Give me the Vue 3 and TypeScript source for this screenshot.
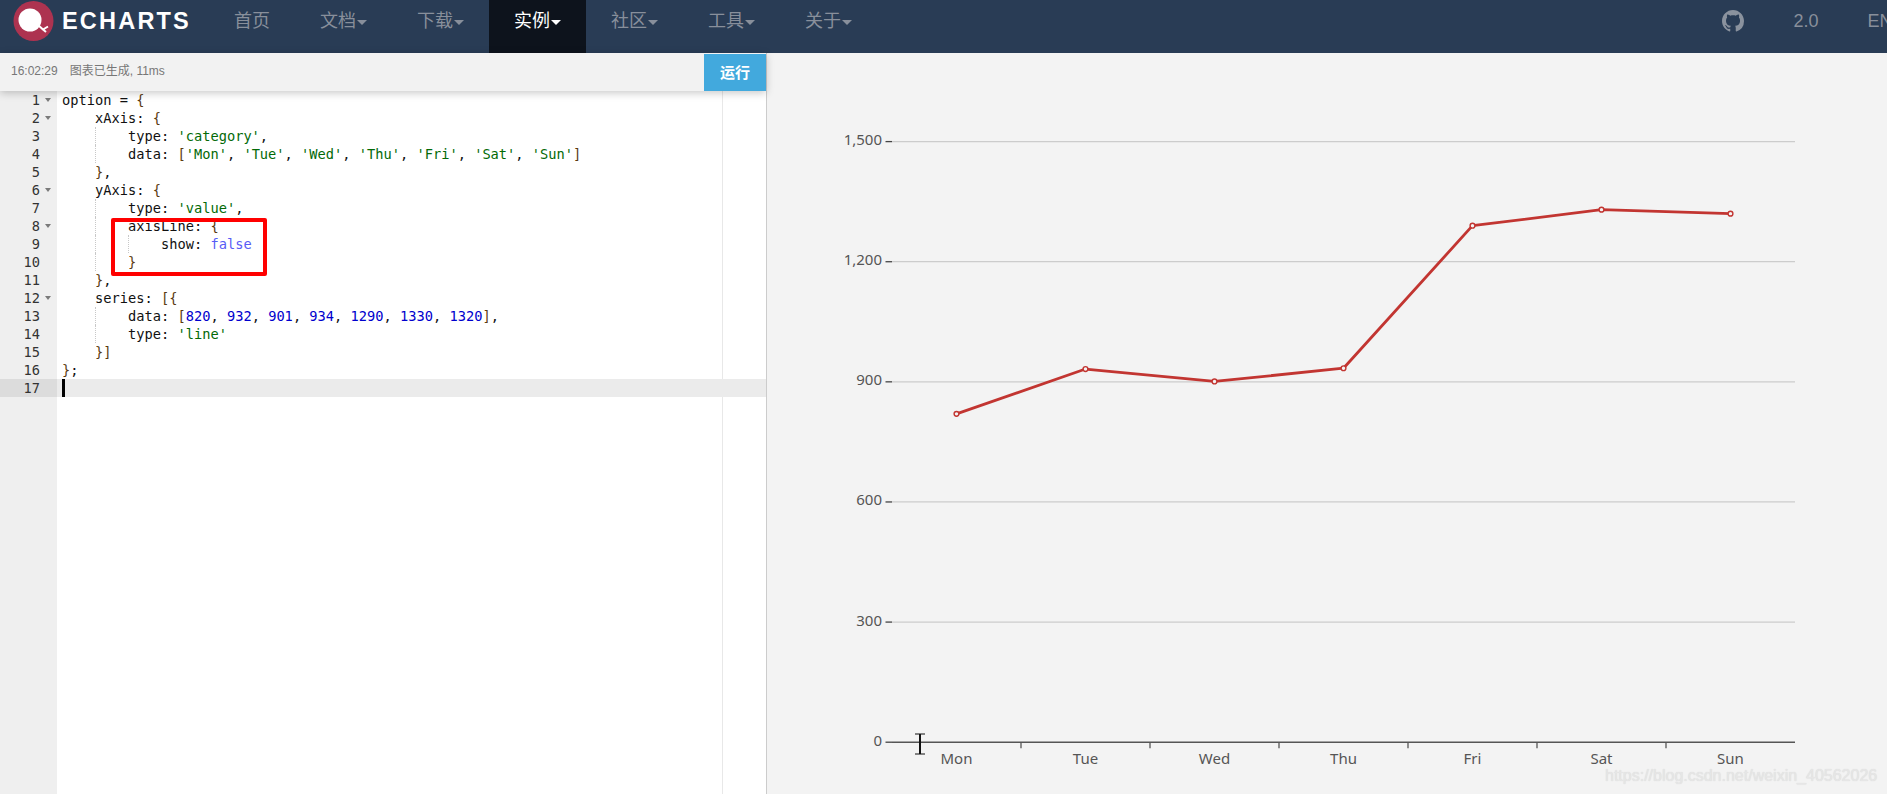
<script setup lang="ts">
type Tok = { t: string; c?: string }
type Line = { level: number; fold?: boolean; toks: Tok[] }

const s = (t: string): Tok => ({ t, c: 'str' })
const n = (t: string): Tok => ({ t, c: 'num' })
const p = (t: string): Tok => ({ t })
const b = (t: string): Tok => ({ t, c: 'br' })

const lines: Line[] = [
  { level: 0, fold: true, toks: [p('option = '), b('{')] },
  { level: 1, fold: true, toks: [p('xAxis: '), b('{')] },
  { level: 2, toks: [p('type: '), s("'category'"), p(',')] },
  {
    level: 2,
    toks: [p('data: '), b('['), s("'Mon'"), p(', '), s("'Tue'"), p(', '), s("'Wed'"), p(', '), s("'Thu'"), p(', '), s("'Fri'"), p(', '), s("'Sat'"), p(', '), s("'Sun'"), b(']')],
  },
  { level: 1, toks: [b('}'), p(',')] },
  { level: 1, fold: true, toks: [p('yAxis: '), b('{')] },
  { level: 2, toks: [p('type: '), s("'value'"), p(',')] },
  { level: 2, fold: true, toks: [p('axisLine: '), b('{')] },
  { level: 3, toks: [p('show: '), { t: 'false', c: 'bool' }] },
  { level: 2, toks: [b('}')] },
  { level: 1, toks: [b('}'), p(',')] },
  { level: 1, fold: true, toks: [p('series: '), b('[{')] },
  {
    level: 2,
    toks: [p('data: '), b('['), n('820'), p(', '), n('932'), p(', '), n('901'), p(', '), n('934'), p(', '), n('1290'), p(', '), n('1330'), p(', '), n('1320'), b(']'), p(',')],
  },
  { level: 2, toks: [p('type: '), s("'line'")] },
  { level: 1, toks: [b('}]')] },
  { level: 0, toks: [b('}'), p(';')] },
  { level: 0, toks: [] },
]

const navItems = [
  { label: '首页', caret: false, active: false },
  { label: '文档', caret: true, active: false },
  { label: '下载', caret: true, active: false },
  { label: '实例', caret: true, active: true },
  { label: '社区', caret: true, active: false },
  { label: '工具', caret: true, active: false },
  { label: '关于', caret: true, active: false },
]

// chart geometry
const left = 892
const right = 1795
const zeroY = 742.2
const pxPerUnit = 600.6 / 1500
const panelX = 767
const panelY = 53
const yOf = (v: number) => zeroY - v * pxPerUnit - panelY
const xL = left - panelX
const xR = right - panelX
const step = (xR - xL) / 7

const yTicks = [1500, 1200, 900, 600, 300, 0].map((v) => ({
  y: yOf(v),
  label: v.toLocaleString('en-US'),
  v,
}))
const days = ['Mon', 'Tue', 'Wed', 'Thu', 'Fri', 'Sat', 'Sun']
const values = [820, 932, 901, 934, 1290, 1330, 1320]
const points = values.map((v, i) => ({ x: xL + step * (i + 0.5), y: yOf(v) }))
const polyline = points.map((q) => `${q.x},${q.y}`).join(' ')
const catTicks = Array.from({ length: 6 }, (_, i) => xL + step * (i + 1))
</script>

<template>
  <div class="page">
    <header class="topbar">
      <div class="brand">
        <svg class="logo" width="42" height="42" viewBox="0 0 42 42">
          <circle cx="20.5" cy="21" r="20" fill="#ad3350" />
          <circle cx="17" cy="20" r="11.5" fill="#fff" />
          <path d="M25 25 L30 29.5 L35 26.5 M30 29.5 L33 32" fill="none" stroke="#fff" stroke-width="2" />
        </svg>
        <span class="wordmark">ECHARTS</span>
      </div>
      <nav class="nav">
        <a v-for="item in navItems" :key="item.label" class="nav-item" :class="{ active: item.active }">
          {{ item.label }}<i v-if="item.caret" class="caret"></i>
        </a>
      </nav>
      <div class="nav-right">
        <svg class="github" width="22" height="22" viewBox="0 0 16 16">
          <path
            fill="#8a929e"
            d="M8 0C3.58 0 0 3.58 0 8c0 3.54 2.29 6.53 5.47 7.59.4.07.55-.17.55-.38 0-.19-.01-.82-.01-1.49-2.01.37-2.53-.49-2.69-.94-.09-.23-.48-.94-.82-1.13-.28-.15-.68-.52-.01-.53.63-.01 1.08.58 1.23.82.72 1.21 1.87.87 2.33.66.07-.52.28-.87.51-1.07-1.78-.2-3.64-.89-3.64-3.95 0-.87.31-1.59.82-2.15-.08-.2-.36-1.02.08-2.12 0 0 .67-.21 2.2.82.64-.18 1.32-.27 2-.27s1.36.09 2 .27c1.53-1.04 2.2-.82 2.2-.82.44 1.1.16 1.92.08 2.12.51.56.82 1.27.82 2.15 0 3.07-1.87 3.75-3.65 3.95.29.25.54.73.54 1.48 0 1.07-.01 1.93-.01 2.2 0 .21.15.46.55.38A8.01 8.01 0 0 0 16 8c0-4.42-3.58-8-8-8z"
          />
        </svg>
        <span class="ver">2.0</span>
        <span class="lang">EN</span>
      </div>
    </header>

    <main class="workspace">
      <section class="left">
        <div class="toolbar">
          <div class="status">
            <span>16:02:29</span>
            <span>图表已生成, 11ms</span>
          </div>
          <button class="run">运行</button>
        </div>
        <div class="editor">
          <div class="gutter">
            <div v-for="(line, i) in lines" :key="i" class="gutter-cell" :class="{ current: i === 16 }">
              <span class="num-label">{{ i + 1 }}</span>
              <i class="fold" :class="{ on: line.fold }"></i>
            </div>
          </div>
          <div class="code">
            <div class="print-margin"></div>
            <div v-for="(line, i) in lines" :key="i" class="code-line" :class="{ current: i === 16 }">
              <span v-for="l in line.level" :key="l" class="indent" :class="{ guide: l > 1 }"></span>
              <span v-for="(tok, j) in line.toks" :key="j" :class="tok.c">{{ tok.t }}</span>
              <i v-if="i === 16" class="cursor"></i>
            </div>
            <div class="highlight-box"></div>
          </div>
        </div>
      </section>

      <section class="right">
        <svg class="chart" width="1120" height="741" viewBox="0 0 1120 741">
          <g v-for="tick in yTicks" :key="tick.v">
            <line v-if="tick.v !== 0" :x1="xL" :x2="xR" :y1="tick.y" :y2="tick.y" stroke="#ccc" stroke-width="1.2" />
            <line :x1="xL - 6.5" :x2="xL" :y1="tick.y" :y2="tick.y" stroke="#444" stroke-width="1.3" />
            <text :x="xL - 10" :y="tick.y + 3.5" text-anchor="end" class="axis-label">{{ tick.label }}</text>
          </g>
          <line :x1="xL" :x2="xR" :y1="yOf(0)" :y2="yOf(0)" stroke="#555" stroke-width="1.6" />
          <line v-for="x in catTicks" :key="x" :x1="x" :x2="x" :y1="yOf(0)" :y2="yOf(0) + 6" stroke="#555" stroke-width="1.3" />
          <text v-for="(d, i) in days" :key="d" :x="points[i].x" :y="yOf(0) + 22" text-anchor="middle" class="axis-label">{{ d }}</text>
          <polyline :points="polyline" fill="none" stroke="#c23531" stroke-width="2.8" stroke-linejoin="round" />
          <circle v-for="(q, i) in points" :key="i" :cx="q.x" :cy="q.y" r="2.4" fill="#f3f3f3" stroke="#c23531" stroke-width="1.4" />
          <path
            d="M148 681 H158 M148 701 H158"
            fill="none"
            stroke="#111"
            stroke-width="1"
          />
          <line x1="153" x2="153" y1="681" y2="701" stroke="#111" stroke-width="2" />
        </svg>
        <div class="watermark">https://blog.csdn.net/weixin_40562026</div>
      </section>
    </main>
  </div>
</template>

<style>
html,
body {
  margin: 0;
  overflow: hidden;
}
</style>

<style scoped>
.page {
  width: 1887px;
  height: 794px;
  display: flex;
  flex-direction: column;
  overflow: hidden;
  font-family: "Liberation Sans", "Noto Sans CJK SC", sans-serif;
  background: #f2f2f2;
}
.topbar {
  height: 53px;
  flex: none;
  background: #293c55;
  display: flex;
  align-items: stretch;
}
.brand {
  width: 209px;
  flex: none;
  display: flex;
  align-items: flex-start;
  padding-left: 13px;
  box-sizing: border-box;
}
.logo {
  flex: none;
}
.wordmark {
  margin-left: 7px;
  margin-top: 7px;
  font-family: "Liberation Sans", sans-serif;
  font-weight: 700;
  font-size: 23.5px;
  line-height: 28px;
  letter-spacing: 2.2px;
  color: #fff;
}
.nav {
  display: flex;
}
.nav-item {
  padding: 8px 25px 0;
  font-size: 18px;
  line-height: 26px;
  color: #888f9b;
  display: block;
}
.nav-item.active {
  background: #0d131c;
  color: #fff;
}
.caret {
  display: inline-block;
  margin-left: 1px;
  vertical-align: middle;
  border-top: 5px solid currentColor;
  border-left: 5px solid transparent;
  border-right: 5px solid transparent;
}
.nav-right {
  margin-left: auto;
  margin-right: -5.5px;
  display: flex;
  align-items: flex-start;
  color: #888f9b;
  font-size: 18px;
  line-height: 26px;
}
.github {
  margin-top: 10px;
}
.ver {
  margin-top: 8px;
  margin-left: 49px;
}
.lang {
  margin-top: 8px;
  margin-left: 49px;
}
.workspace {
  flex: 1;
  display: flex;
  min-height: 0;
}
.left {
  width: 766px;
  flex: none;
  display: flex;
  flex-direction: column;
  background: #fff;
}
.toolbar {
  height: 38px;
  flex: none;
  position: relative;
  z-index: 2;
  background: #f2f2f2;
  box-shadow: 0 2px 8px rgba(0, 0, 0, 0.22);
  display: flex;
  justify-content: space-between;
}
.status {
  display: flex;
  gap: 12px;
  padding-left: 11px;
  font-size: 12px;
  line-height: 36px;
  color: #777;
}
.run {
  width: 62px;
  height: 37px;
  margin-top: 1px;
  border: 0;
  padding: 0 0 3px;
  background: #42a9dd;
  color: #fff;
  font-family: inherit;
  font-size: 15px;
  font-weight: 700;
}
.editor {
  flex: 1;
  display: flex;
  min-height: 0;
  font-family: "DejaVu Sans Mono", monospace;
  font-size: 13.7px;
  line-height: 18px;
}
.gutter {
  width: 57px;
  flex: none;
  background: #efefef;
  color: #333;
}
.gutter-cell {
  height: 18px;
  display: flex;
  align-items: center;
  justify-content: flex-end;
  padding-right: 4px;
}
.gutter-cell.current {
  background: #dcdcdc;
}
.num-label {
  font-size: 13.7px;
}
.fold {
  width: 13px;
  height: 0;
  display: block;
  box-sizing: border-box;
}
.fold.on {
  margin-left: 0;
  position: relative;
}
.fold.on::after {
  content: "";
  position: absolute;
  left: 5px;
  top: -2px;
  border-top: 4.5px solid #7a7a7a;
  border-left: 3.5px solid transparent;
  border-right: 3.5px solid transparent;
}
.code {
  flex: 1;
  position: relative;
  min-width: 0;
}
.print-margin {
  position: absolute;
  left: 665px;
  top: 0;
  bottom: 0;
  width: 1px;
  background: #e8e8e8;
}
.code-line {
  position: relative;
  height: 18px;
  padding-left: 5px;
  white-space: pre;
  color: #111;
}
.code-line.current {
  background: #ebebeb;
}
.indent {
  display: inline-block;
  width: 33px;
  height: 18px;
  vertical-align: top;
  box-sizing: border-box;
}
.indent.guide {
  border-left: 1px dotted #c8c8c8;
}
.str {
  color: #036a07;
}
.num {
  color: #0000cd;
}
.bool {
  color: #585cf6;
}
.br {
  color: #5a3a10;
}
.cursor {
  position: absolute;
  left: 5px;
  top: 0;
  width: 3px;
  height: 18px;
  background: #000;
}
.highlight-box {
  position: absolute;
  left: 54px;
  top: 127px;
  width: 156px;
  height: 58px;
  box-sizing: border-box;
  border: 4px solid #f00;
  border-radius: 2px;
}
.right {
  flex: 1;
  position: relative;
  min-width: 0;
  border-left: 1px solid #ccc;
  background: #f3f3f3;
}
.chart {
  position: absolute;
  left: 0;
  top: 0;
  display: block;
}
.axis-label {
  font-family: "Noto Sans", sans-serif;
  font-size: 15px;
  fill: #555;
}
.watermark {
  position: absolute;
  left: 838px;
  top: 714px;
  font-size: 16px;
  line-height: 18px;
  color: #e6e6e6;
  text-shadow: 0 0 1px #d4d4d4;
  white-space: nowrap;
}
</style>
